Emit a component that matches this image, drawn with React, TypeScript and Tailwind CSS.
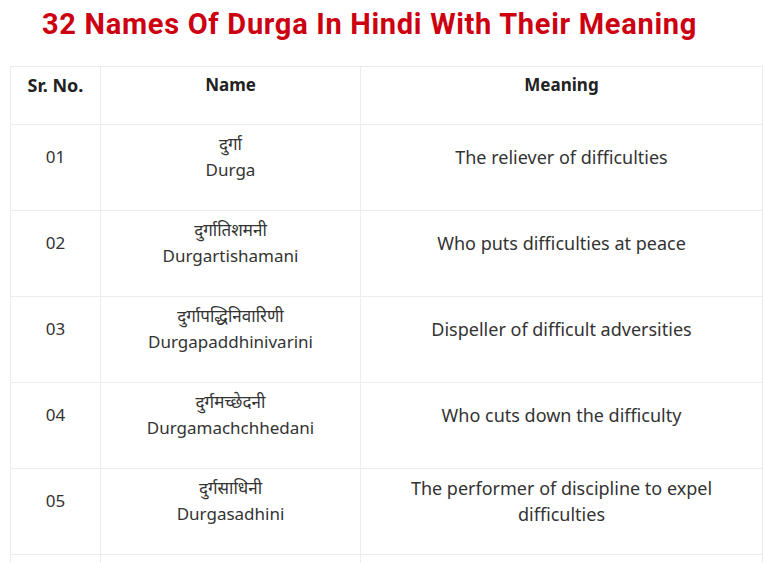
const rows = [
  { no: "01", hi: "दुर्गा", en: "Durga", meaning: "The reliever of difficulties" },
  { no: "02", hi: "दुर्गातिशमनी", en: "Durgartishamani", meaning: "Who puts difficulties at peace" },
  { no: "03", hi: "दुर्गापद्धिनिवारिणी", en: "Durgapaddhinivarini", meaning: "Dispeller of difficult adversities" },
  { no: "04", hi: "दुर्गमच्छेदनी", en: "Durgamachchhedani", meaning: "Who cuts down the difficulty" },
  { no: "05", hi: "दुर्गसाधिनी", en: "Durgasadhini", meaning: "The performer of discipline to expel difficulties" },
  { no: "06", hi: "दुर्गनाशिनी", en: "Durganashini", meaning: "The destroyer of difficulty" },
];

const cell = "border border-[#ececec] pt-[6px] pb-[27px] align-middle text-center";
const head = "border border-[#ececec] px-3 pt-[5px] pb-[26px] align-middle text-center font-bold text-[#222]";

export default function App() {
  return (
    <div className="h-[563px] w-[768px] overflow-hidden bg-white font-['Noto_Sans','Noto_Sans_Devanagari',sans-serif] text-[17px] leading-[26px] text-[#333]">
      <h1 className="pl-[42px] pt-[4px] font-['Roboto',sans-serif] text-[29px] font-bold leading-[40px] tracking-[0.7px] text-[#cc0011]">
        32 Names Of Durga In Hindi With Their Meaning
      </h1>

      <table className="ml-[10px] mt-[22px] w-[752px] table-fixed border-collapse">
        <colgroup>
          <col className="w-[90px]" />
          <col className="w-[260px]" />
          <col className="w-[402px]" />
        </colgroup>
        <thead>
          <tr>
            <th className={`${head} text-[18px]`}>Sr. No.</th>
            <th className={head}>Name</th>
            <th className={head}>Meaning</th>
          </tr>
        </thead>
        <tbody>
          {rows.map((r) => (
            <tr key={r.no} className="h-[86px]">
              <td className={`${cell} px-3`}>{r.no}</td>
              <td className={`${cell} px-3`}>
                <div>{r.hi}</div>
                <div>{r.en}</div>
              </td>
              <td className={`${cell} px-[40px] text-[18px]`}>{r.meaning}</td>
            </tr>
          ))}
        </tbody>
      </table>
    </div>
  );
}
